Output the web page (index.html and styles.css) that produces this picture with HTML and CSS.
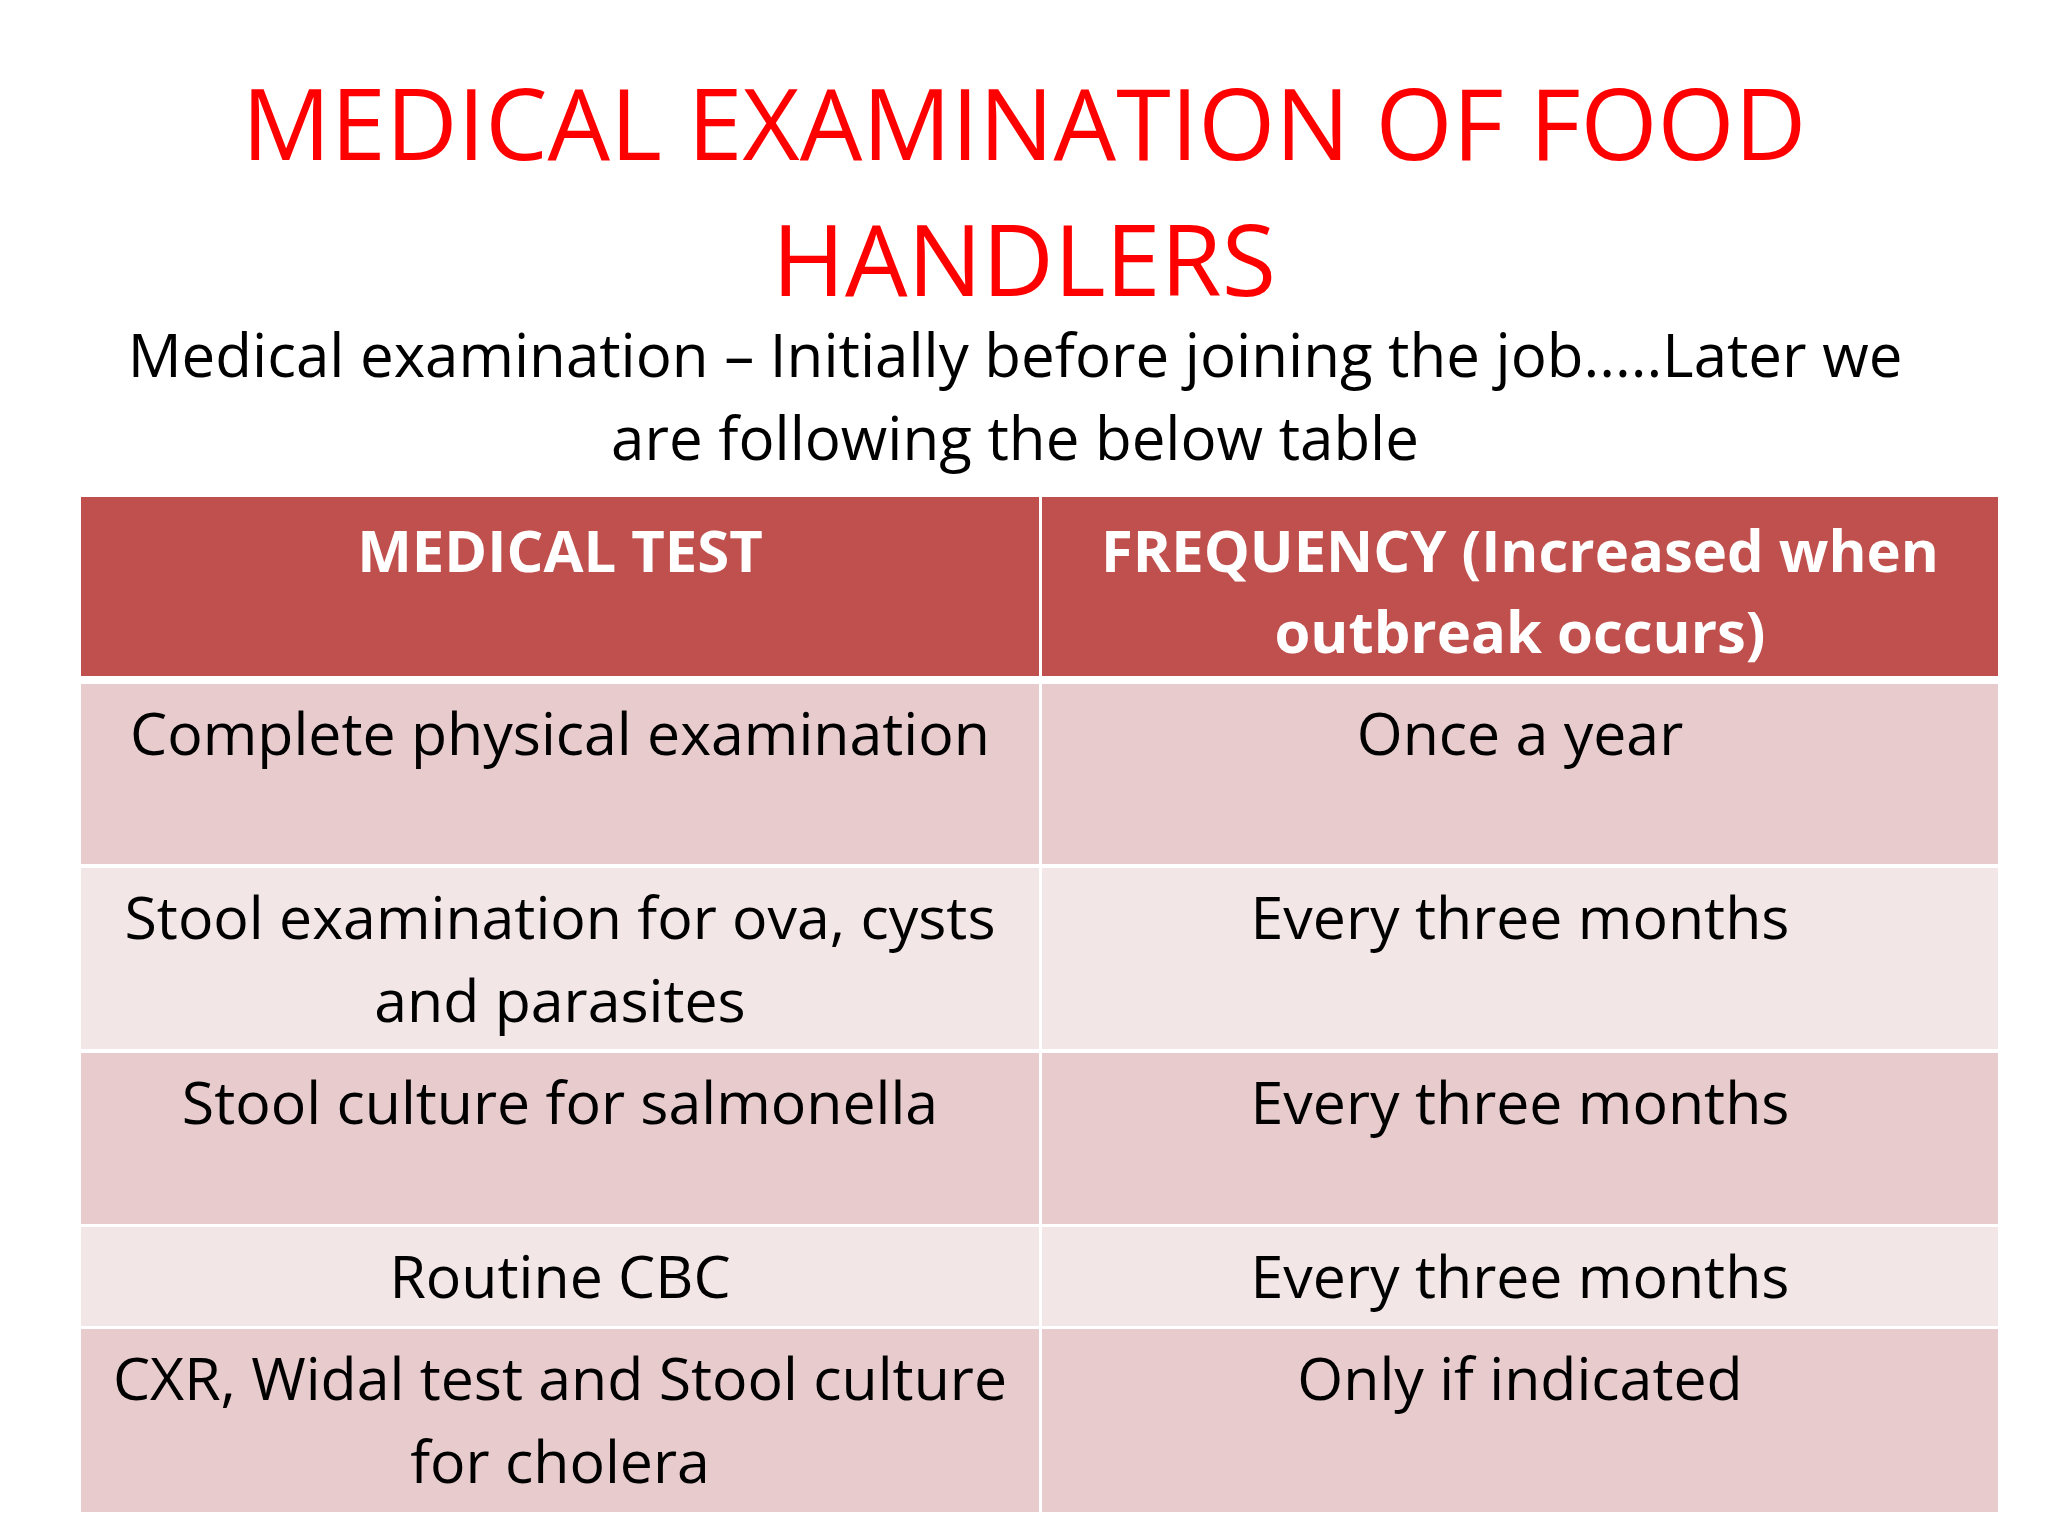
FILE: index.html
```html
<!DOCTYPE html>
<html>
<head>
<meta charset="utf-8">
<link rel="stylesheet" href="styles.css">
</head>
<body>
<div class="slide">
  <h1 class="title">MEDICAL EXAMINATION OF FOOD<br>HANDLERS</h1>
  <p class="subtitle">Medical examination – Initially before joining the job.....Later we<br>are following the below table</p>
  <div class="table">
    <div class="row head">
      <div class="cell">MEDICAL TEST</div>
      <div class="cell">FREQUENCY (Increased when<br>outbreak occurs)</div>
    </div>
    <div class="row band r1">
      <div class="cell">Complete physical examination</div>
      <div class="cell">Once a year</div>
    </div>
    <div class="row light r2">
      <div class="cell">Stool examination for ova, cysts<br>and parasites</div>
      <div class="cell">Every three months</div>
    </div>
    <div class="row band r3">
      <div class="cell">Stool culture for salmonella</div>
      <div class="cell">Every three months</div>
    </div>
    <div class="row light r4">
      <div class="cell">Routine CBC</div>
      <div class="cell">Every three months</div>
    </div>
    <div class="row band r5">
      <div class="cell">CXR, Widal test and Stool culture<br>for cholera</div>
      <div class="cell">Only if indicated</div>
    </div>
  </div>
</div>
</body>
</html>
```

FILE: styles.css
```css
html, body {
  margin: 0;
  padding: 0;
  background: #ffffff;
}
.slide {
  width: 2048px;
  height: 1536px;
  overflow: hidden;
  font-family: "Open Sans", "Noto Sans", sans-serif;
  color: #000000;
}
.title {
  margin: 54px 0 0 0;
  font-size: 99px;
  line-height: 136px;
  font-weight: 400;
  color: #ff0000;
  text-align: center;
}
.subtitle {
  margin: -13px 0 0 0;
  padding-right: 18px;
  font-size: 60px;
  line-height: 83px;
  text-align: center;
}
.table {
  margin: 18px 0 0 81px;
  width: 1917px;
  display: flex;
  flex-direction: column;
}
.row {
  display: grid;
  grid-template-columns: 958px 956px;
  column-gap: 3px;
}
.cell {
  text-align: center;
  font-size: 59px;
  line-height: 83px;
  padding-top: 7px;
  box-sizing: border-box;
  white-space: nowrap;
}
.head {
  height: 179px;
  margin-bottom: 8px;
}
.head .cell {
  background: #c0504d;
  color: #ffffff;
  font-weight: 700;
  font-size: 58px;
  line-height: 81px;
  padding-top: 12px;
}
.band .cell {
  background: #e8cccd;
}
.light .cell {
  background: #f2e6e6;
}
.r1 { height: 180px; margin-bottom: 4px; }
.r2 { height: 181px; margin-bottom: 4px; }
.r3 { height: 171px; margin-bottom: 3px; }
.r4 { height: 99px; margin-bottom: 3px; }
.r5 { height: 183px; }
```
